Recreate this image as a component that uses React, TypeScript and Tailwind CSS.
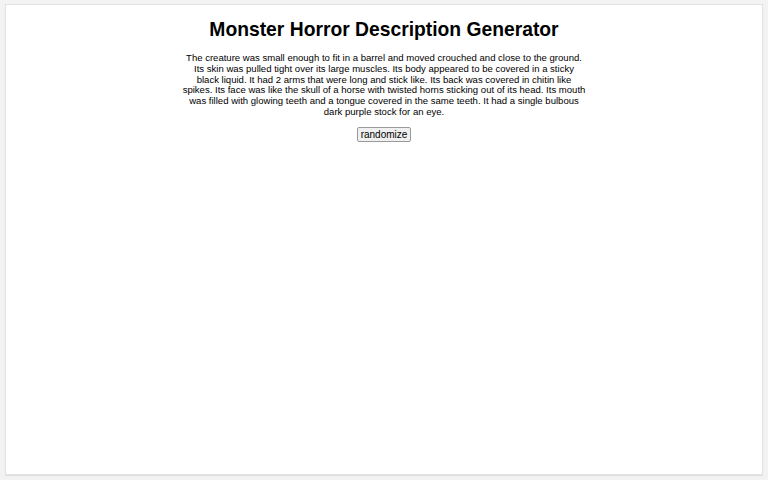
export default function App() {
  return (
    <div className="min-h-screen bg-[#f3f3f3] p-[4px_5px_5px_5px]" style={{ fontFamily: '"Liberation Sans", Arial, sans-serif' }}>
      <div className="h-[471px] bg-white border border-[#e2e2e2] shadow-[0_1px_1px_rgba(0,0,0,0.08)] flex flex-col items-center">
        <h1 className="mt-[13px] text-[19.3px] leading-[24px] font-bold text-black">Monster Horror Description Generator</h1>
        <p className="mt-[11px] w-[404px] text-center text-[9.55px] leading-[10.8px] text-black">
          The creature was small enough to fit in a barrel and moved crouched and close to the ground. Its skin was pulled tight over its large muscles. Its body appeared to be covered in a sticky black liquid. It had 2 arms that were long and stick like. Its back was covered in chitin like spikes. Its face was like the skull of a horse with twisted horns sticking out of its head. Its mouth was filled with glowing teeth and a tongue covered in the same teeth. It had a single bulbous dark purple stock for an eye.
        </p>
        <button className="mt-[9px] px-[3px] h-[15px] text-[10px] leading-[13px] bg-[#f0f0f0] border border-[#9a9a9a] rounded-[2px] text-black">randomize</button>
      </div>
    </div>
  );
}
